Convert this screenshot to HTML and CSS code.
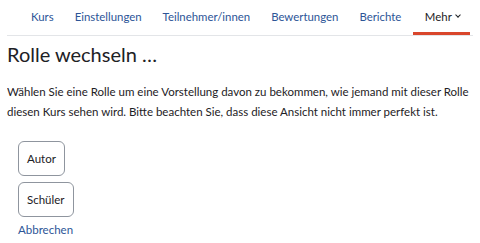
FILE: index.html
```html
<!DOCTYPE html>
<html lang="de">
<head>
    <meta name="viewport" content="width=device-width, initial-scale=1">
    <link rel="stylesheet" href="styles.css">
    <title>Rolle wechseln</title>
</head>
<body>
<nav class="secondaryNav">
    <a class="navLink" href="#">Kurs</a>
    <a class="navLink" href="#">Einstellungen</a>
    <a class="navLink" href="#">Teilnehmer/innen</a>
    <a class="navLink" href="#">Bewertungen</a>
    <a class="navLink" href="#">Berichte</a>
    <a class="navLink active" href="#">Mehr <span class="caret"></span></a>
</nav>
<div class="pageWrapper">
    <h2>Rolle wechseln …</h2>
    <p>Wählen Sie eine Rolle um eine Vorstellung davon zu bekommen, wie jemand mit dieser Rolle diesen Kurs sehen wird. Bitte beachten Sie, dass diese Ansicht nicht immer perfekt ist.</p>
    <div class="roleList">
        <div><button class="btn">Autor</button></div>
        <div><button class="btn">Schüler</button></div>
    </div>
    <a class="cancelLink" href="#">Abbrechen</a>
</div>
</body>
</html>
```

FILE: styles.css
```css
body {
    margin: 0 7px;
    font-family: Lato, "Noto Sans", sans-serif;
    font-size: 11.5px;
    color: #1d2125;
    background: #fff;
}

.secondaryNav {
    display: flex;
    height: 35px;
    padding: 0 2px 0 13.5px;
    border-bottom: 1px solid #e3e5e8;
}
.navLink {
    display: flex;
    align-items: center;
    padding: 0 10.5px;
    height: 32px;
    font-size: 11.4px;
    color: #2d5597;
    text-decoration: none;
    border-bottom: 3px solid transparent;
}
.navLink.active {
    color: #1d2125;
    border-bottom-color: #d9462c;
    padding: 0 10px 0 12px;
    margin-left: 1px;
}
.caret {
    display: inline-block;
    width: 3px;
    height: 3px;
    margin: 0 0 3px 4px;
    border-right: 1.3px solid #1d2125;
    border-bottom: 1.3px solid #1d2125;
    transform: rotate(45deg);
}

.pageWrapper > h2 {
    margin: 4px 0 0 0;
    font-size: 20px;
    font-weight: normal;
    line-height: 28px;
}
.pageWrapper > p {
    margin: 14px 0 0 0;
    line-height: 20px;
}

.roleList {
    margin: 19px 0 0 11px;
}
.roleList > div {
    margin-bottom: 6px;
}
.btn {
    font-family: inherit;
    font-size: 11.5px;
    color: #1d2125;
    background: #fff;
    border: 1px solid #8f959e;
    border-radius: 6px;
    padding: 0 8px;
    height: 35px;
    cursor: pointer;
}

.cancelLink {
    display: inline-block;
    margin: -4px 0 0 11px;
    line-height: 20px;
    color: #2d5597;
    text-decoration: none;
}
```
